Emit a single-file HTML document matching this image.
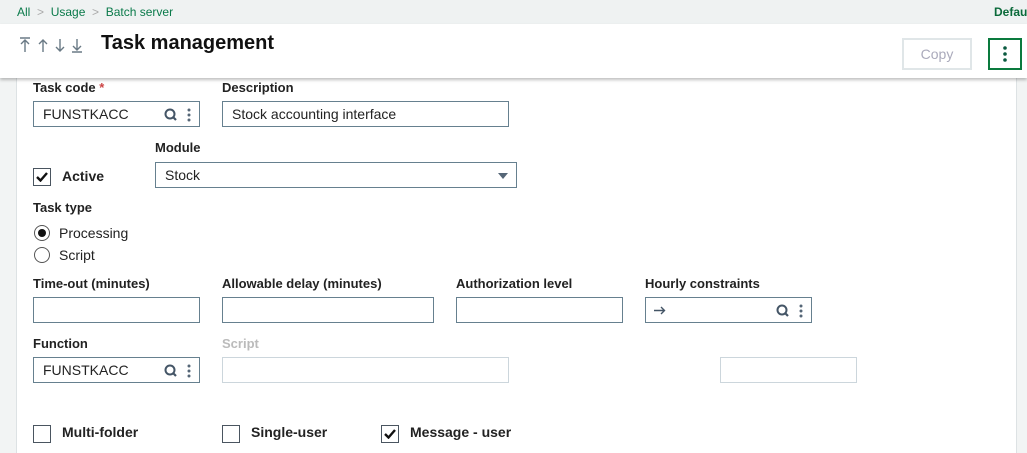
<!DOCTYPE html>
<html><head><style>
body{margin:0;width:1027px;height:453px;overflow:hidden;background:#fff;font-family:"Liberation Sans",sans-serif;position:relative}
.a{position:absolute}
.lbl{position:absolute;font-size:13px;font-weight:bold;color:#222;line-height:16px}
.in{position:absolute;box-sizing:border-box;border:1px solid #66808f;background:#fff;height:26px;font-size:14px;color:#222;padding-left:9px;line-height:24px}
.dis{border-color:#ccd6dc}
.cb{position:absolute;box-sizing:border-box;width:18px;height:18px;border:1px solid #4a5560;background:#fff}
.rd{position:absolute;box-sizing:border-box;width:16px;height:16px;border:1px solid #555;border-radius:50%}
.txt{position:absolute;font-size:14px;color:#222;line-height:16px}
.ic{position:absolute;right:6px;top:5px}
</style></head><body>
<div class="a" style="left:0;top:0;width:1027px;height:24px;background:#eff2f2"></div>
<div class="a" style="left:17px;top:4px;font-size:12px;color:#0a7a4a;line-height:16px">All <span style="color:#aaa">&nbsp;&gt;&nbsp;</span> Usage <span style="color:#aaa">&nbsp;&gt;&nbsp;</span> Batch server</div>
<div class="a" style="left:994px;top:4px;font-size:12px;font-weight:bold;color:#0a6a3a;line-height:16px">Default</div>
<div class="a" style="left:0;top:78px;width:16px;height:375px;background:#f2f4f4;border-right:1px solid #dde2e4"></div>
<div class="a" style="left:1016px;top:78px;width:11px;height:375px;background:#f2f4f4;border-left:1px solid #dde2e4"></div>
<div class="a" style="left:0;top:24px;width:1027px;height:54px;background:#fff;box-shadow:0 2px 3px rgba(0,0,0,.25)"></div>
<svg class="a" style="left:18px;top:37px" width="70" height="16" viewBox="0 0 70 16" fill="none" stroke="#6a7a85" stroke-width="1.4">
<path d="M2 1h10M7 15V3M3 7l4-4 4 4"/>
<path d="M25 15V3M21 7l4-4 4 4"/>
<path d="M42 2v12M38 10l4 4 4-4"/>
<path d="M59 2v11M55 9l4 4 4-4M54 15h10"/>
</svg>
<div class="a" style="left:101px;top:32px;font-size:20px;font-weight:bold;color:#111">Task management</div>
<div class="a" style="left:902px;top:38px;width:70px;height:32px;box-sizing:border-box;border:2px solid #e0e6e8;color:#aab;font-size:14px;text-align:center;line-height:28px">Copy</div>
<div class="a" style="left:988px;top:38px;width:34px;height:32px;box-sizing:border-box;border:2px solid #0a7a3e">
<svg class="a" style="left:13px;top:6px" width="4" height="16"><circle cx="2" cy="2" r="1.8" fill="#0a5a40"/><circle cx="2" cy="8" r="1.8" fill="#0a5a40"/><circle cx="2" cy="14" r="1.8" fill="#0a5a40"/></svg></div>

<div class="lbl" style="left:33px;top:80px">Task code <span style="color:#c44">*</span></div>
<div class="in" style="left:33px;top:101px;width:167px">FUNSTKACC<svg class="ic" width="30" height="16"><circle cx="7" cy="7" r="4.5" stroke="#456" stroke-width="2" fill="none"/><path d="M10 10l3 3" stroke="#456" stroke-width="2.2"/><circle cx="26" cy="3" r="1.5" fill="#567"/><circle cx="26" cy="8" r="1.5" fill="#567"/><circle cx="26" cy="13" r="1.5" fill="#567"/></svg></div>
<div class="lbl" style="left:222px;top:80px">Description</div>
<div class="in" style="left:222px;top:101px;width:287px">Stock accounting interface</div>
<div class="lbl" style="left:155px;top:140px">Module</div>
<div class="in" style="left:155px;top:162px;width:362px">Stock<svg class="a" style="right:8px;top:10px" width="10" height="6"><path d="M0 0h10L5 6z" fill="#567"/></svg></div>
<div class="cb" style="left:33px;top:168px"><svg class="a" style="left:2px;top:3px" width="12" height="10"><path d="M1 5l3.5 3.5L11 1" stroke="#111" stroke-width="2.4" fill="none"/></svg></div>
<div class="lbl" style="left:62px;top:168px;font-size:14px">Active</div>

<div class="lbl" style="left:33px;top:200px">Task type</div>
<div class="rd" style="left:34px;top:225px"><div class="a" style="left:3px;top:3px;width:8px;height:8px;border-radius:50%;background:#111"></div></div>
<div class="txt" style="left:59px;top:225px">Processing</div>
<div class="rd" style="left:34px;top:247px"></div>
<div class="txt" style="left:59px;top:247px">Script</div>

<div class="lbl" style="left:33px;top:276px">Time-out (minutes)</div>
<div class="in" style="left:33px;top:297px;width:167px"></div>
<div class="lbl" style="left:222px;top:276px">Allowable delay (minutes)</div>
<div class="in" style="left:222px;top:297px;width:212px"></div>
<div class="lbl" style="left:456px;top:276px">Authorization level</div>
<div class="in" style="left:456px;top:297px;width:167px"></div>
<div class="lbl" style="left:645px;top:276px">Hourly constraints</div>
<div class="in" style="left:645px;top:297px;width:167px"><svg class="a" style="left:8px;top:8px" width="12" height="9"><path d="M0 4.5h10M7 1l3.5 3.5L7 8" stroke="#456" stroke-width="1.4" fill="none"/></svg><svg class="ic" width="30" height="16"><circle cx="7" cy="7" r="4.5" stroke="#456" stroke-width="2" fill="none"/><path d="M10 10l3 3" stroke="#456" stroke-width="2.2"/><circle cx="26" cy="3" r="1.5" fill="#567"/><circle cx="26" cy="8" r="1.5" fill="#567"/><circle cx="26" cy="13" r="1.5" fill="#567"/></svg></div>

<div class="lbl" style="left:33px;top:336px">Function</div>
<div class="in" style="left:33px;top:357px;width:167px">FUNSTKACC<svg class="ic" width="30" height="16"><circle cx="7" cy="7" r="4.5" stroke="#456" stroke-width="2" fill="none"/><path d="M10 10l3 3" stroke="#456" stroke-width="2.2"/><circle cx="26" cy="3" r="1.5" fill="#567"/><circle cx="26" cy="8" r="1.5" fill="#567"/><circle cx="26" cy="13" r="1.5" fill="#567"/></svg></div>
<div class="lbl" style="left:222px;top:336px;color:#bbb">Script</div>
<div class="in dis" style="left:222px;top:357px;width:287px"></div>
<div class="in dis" style="left:720px;top:357px;width:137px"></div>

<div class="cb" style="left:33px;top:425px"></div>
<div class="lbl" style="left:62px;top:424px;font-size:14px">Multi-folder</div>
<div class="cb" style="left:222px;top:425px"></div>
<div class="lbl" style="left:251px;top:424px;font-size:14px">Single-user</div>
<div class="cb" style="left:381px;top:425px"><svg class="a" style="left:2px;top:3px" width="12" height="10"><path d="M1 5l3.5 3.5L11 1" stroke="#111" stroke-width="2.4" fill="none"/></svg></div>
<div class="lbl" style="left:410px;top:424px;font-size:14px">Message - user</div>
</body></html>
